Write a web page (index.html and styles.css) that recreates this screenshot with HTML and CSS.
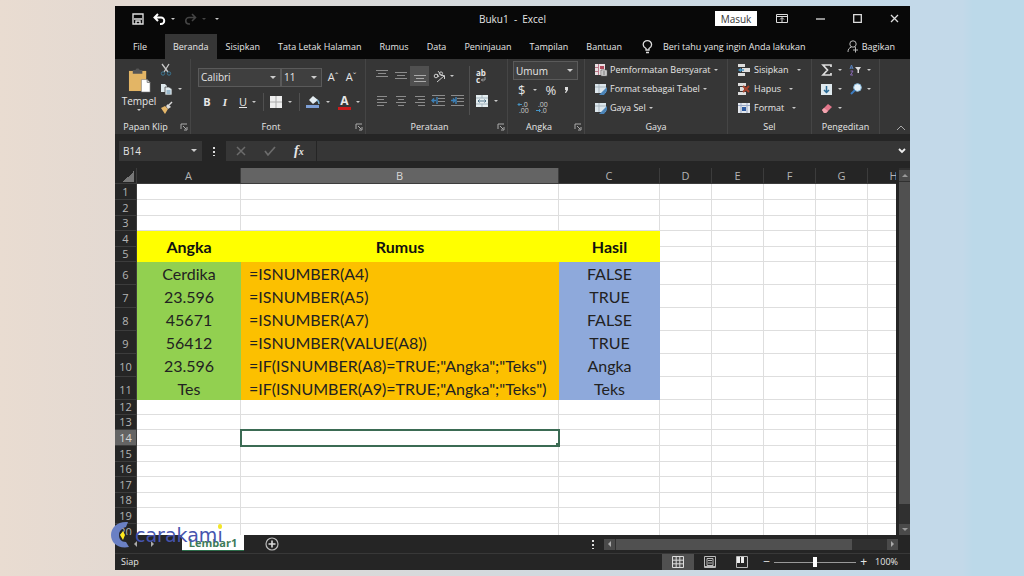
FILE: index.html
```html
<!DOCTYPE html>
<html lang="id">
<head>
  <meta charset="UTF-8" />
  <meta name="viewport" content="width=device-width, initial-scale=1.0"/>
  <title>Buku1 - Excel</title>
  <link rel="stylesheet" href="styles.css">
</head>
<body>
  <svg class="defs" aria-hidden="true">
    <symbol id="launch" viewBox="0 0 8 8"><path d="M1 6V1h6M3 3l3 3M7 4v3H4" fill="none" stroke="#aaa"/></symbol>
    <symbol id="table" viewBox="0 0 12 12"><path d="M0 1h11v9H0z" fill="#dce6ec"/><path d="M0 4h11M4 1v9" stroke="#a9b6bf" fill="none"/><path d="M12 4L7 9l-3 3h5l3-4z" fill="#4b84b8"/></symbol>
  </svg>

  <div class="window">
    <header class="titlebar">
      <div class="quick">
        <button aria-label="Simpan"><svg width="12" height="12" viewBox="0 0 12 12"><path d="M1 1h10v10H1z" fill="none" stroke="#ddd" stroke-width="1.4"/><path d="M2 6h8M4 11V8h4v3" fill="none" stroke="#ddd" stroke-width="1.4"/></svg></button>
        <button class="undo" aria-label="Urungkan"><svg width="13" height="12" viewBox="0 0 13 12"><path d="M5 1L1.500 4.500 5 8M2 4.500h6a3 3 0 0 1 0 6.500H7" fill="none" stroke="#fff" stroke-width="2"/></svg><i class="caret"></i></button>
        <button class="redo" aria-label="Ulangi"><svg width="13" height="12" viewBox="0 0 13 12"><path d="M8 1l3.500 3.500L8 8M11 4.500H5A3 3 0 0 0 5 11h1" fill="none" stroke="#444" stroke-width="1.600"/></svg><i class="caret dim"></i></button>
        <button class="more" aria-label="Kustomisasi"><i class="caret"></i></button>
      </div>
      <div class="title">Buku1 &nbsp;-&nbsp; Excel</div>
      <div class="controls">
        <button class="signin">Masuk</button>
        <button aria-label="Opsi pita"><svg width="12" height="9" viewBox="0 0 12 9"><path d="M.5.5h11v8H.5zM1 2.500h10M6 8V4M4 5.500l2-2 2 2" fill="none" stroke="#ddd"/></svg></button>
        <button aria-label="Kecilkan"><svg width="9" height="9" viewBox="0 0 9 9"><path d="M0 5h9" stroke="#ddd" stroke-width="1.300"/></svg></button>
        <button aria-label="Besarkan"><svg width="9" height="9" viewBox="0 0 9 9"><path d="M.7.7h7.600v7.600H.7z" fill="none" stroke="#ddd" stroke-width="1.300"/></svg></button>
        <button aria-label="Tutup"><svg width="9" height="9" viewBox="0 0 9 9"><path d="M1 1l7 7M8 1L1 8" stroke="#ddd" stroke-width="1.300"/></svg></button>
      </div>
    </header>

    <nav class="tabs">
      <button class="file">File</button>
      <button class="active">Beranda</button>
      <button>Sisipkan</button>
      <button>Tata Letak Halaman</button>
      <button>Rumus</button>
      <button>Data</button>
      <button>Peninjauan</button>
      <button>Tampilan</button>
      <button>Bantuan</button>
      <button class="tell"><svg width="11" height="14" viewBox="0 0 11 14"><path d="M4 10V8.500C2 7.500 1.200 6.500 1.200 4.800a4.200 4.200 0 0 1 8.400 0C9.600 6.500 9 7.500 7 8.500V10zM4 12.500h3" fill="none" stroke="#ddd" stroke-width="1.300"/></svg>Beri tahu yang ingin Anda lakukan</button>
      <button class="share"><svg width="12" height="13" viewBox="0 0 12 13"><circle cx="6" cy="4" r="3.200" fill="none" stroke="#bbb"/><path d="M1 12c0-3 1-4 3.500-5M7.500 7l1.500 1M6 10h5M8.500 7.500v5" fill="none" stroke="#bbb"/></svg>Bagikan</button>
    </nav>

    <section class="ribbon">
      <div class="group">
        <div class="clipboard">
          <button class="paste"><svg width="23" height="25" viewBox="0 0 24 26"><path d="M1 3h18v21H1z" fill="#e3b565"/><path d="M5 2h3c0-2 4-2 4 0h3v4H5z" fill="#555"/><path d="M14 12h6l3 3v10h-9z" fill="#fff" stroke="#777" stroke-width=".6"/><path d="M20 12v3h3" fill="none" stroke="#777"/></svg><span>Tempel</span><i class="caret"></i></button>
          <div class="clip-tools">
            <button aria-label="Potong"><svg width="12" height="12" viewBox="0 0 12 12"><path d="M2 0l6 8M9 0L4 8" stroke="#c8c8c8" stroke-width="1.300"/><circle cx="3" cy="9.500" r="1.700" fill="none" stroke="#3b7692"/><circle cx="9" cy="9.500" r="1.700" fill="none" stroke="#3b7692"/></svg></button>
            <button aria-label="Salin"><svg width="12" height="12" viewBox="0 0 12 12"><path d="M1 1h4l2 2v6H1z" fill="#dfe9ed"/><path d="M5 4h4l3 2v6H5z" fill="#dfe9ed" stroke="#3c3c3c" stroke-width=".7"/><path d="M6.500 8h4M6.500 10h4" stroke="#58a"/></svg><i class="caret"></i></button>
            <button aria-label="Pemformat"><svg width="12" height="12" viewBox="0 0 12 12"><path d="M1 6l4-2 3 3-3 5z" fill="#e5b76a"/><path d="M6 4l2-2 3 3-3 2z" fill="#ddd"/><path d="M9 3l3-3" stroke="#ddd" stroke-width="1.500"/></svg></button>
          </div>
        </div>
        <div class="label more-label">Papan Klip<svg class="launch"><use href="#launch"/></svg></div>
      </div>

      <div class="group">
        <div class="tools font-tools">
          <div class="row">
            <span class="select wide"><select aria-label="Font"><option>Calibri</option></select></span>
            <span class="select size"><select aria-label="Ukuran font"><option>11</option></select></span>
            <button class="letter grow">A<sup>ˆ</sup></button>
            <button class="letter">A<sup>ˇ</sup></button>
          </div>
          <div class="row">
            <button class="letter"><b>B</b></button>
            <button class="letter serif"><b><i>I</i></b></button>
            <button class="letter"><u>U</u></button>
            <button aria-label="Opsi garis bawah"><i class="caret"></i></button>
            <button class="sep" aria-label="Batas"><svg width="12" height="12" viewBox="0 0 12 12"><path d="M0 0h12v12H0z" fill="#eee"/><path d="M6 0v12M0 6h12" stroke="#aaa"/></svg><i class="caret"></i></button>
            <button class="sep" aria-label="Warna isian"><svg width="14" height="14" viewBox="0 0 14 14"><path d="M3 5l4-4 5 4-5 4z" fill="#e4edf2"/><path d="M11 5c2 1 2 3 2 4" stroke="#79b3d8" fill="none" stroke-width="1.500"/><path d="M0 10h13v3H0z" fill="#7d9fd6"/></svg><i class="caret"></i></button>
            <button class="color" aria-label="Warna font"><span>A</span><i class="caret"></i></button>
          </div>
        </div>
        <div class="label more-label">Font<svg class="launch"><use href="#launch"/></svg></div>
      </div>

      <div class="group">
        <div class="tools align-tools">
          <div class="align-set">
            <button aria-label="Rata atas"><svg width="12" height="14" viewBox="0 0 12 14"><path d="M0 1.500h12M2 4.500h8M0 7.500h12" stroke="#8c8c8c"/></svg></button>
            <button aria-label="Rata tengah"><svg width="12" height="14" viewBox="0 0 12 14"><path d="M0 3.500h12M2 6.500h8M0 9.500h12" stroke="#8c8c8c"/></svg></button>
            <button class="on" aria-label="Rata bawah"><svg width="12" height="14" viewBox="0 0 12 14"><path d="M0 6.500h12M2 9.500h8M0 12.500h12" stroke="#aaa"/></svg></button>
            <button class="two" aria-label="Orientasi"><svg width="14" height="13" viewBox="0 0 14 13"><g fill="none" stroke="#ccc"><circle cx="3" cy="6" r="1.800"/><path d="M4 4l2 3M5 1l3 4"/><circle cx="8" cy="3.500" r="1.600"/><path d="M4 12l7-6M8 5.500h3.500V9"/></g></svg><i class="caret"></i></button>
            <button aria-label="Rata kiri"><svg width="10" height="10" viewBox="0 0 10 10"><path d="M0 .5h10M0 3.500h7M0 6.500h10M0 9.500h7" stroke="#8c8c8c"/></svg></button>
            <button aria-label="Rata pusat"><svg width="10" height="10" viewBox="0 0 10 10"><path d="M0 .5h10M2 3.500h6M0 6.500h10M2 9.500h6" stroke="#8c8c8c"/></svg></button>
            <button aria-label="Rata kanan"><svg width="10" height="10" viewBox="0 0 10 10"><path d="M0 .5h10M3 3.500h7M0 6.500h10M3 9.500h7" stroke="#8c8c8c"/></svg></button>
            <button aria-label="Kurangi inden"><svg width="13" height="12" viewBox="0 0 13 12"><path d="M0 .5h13M6 3.500h7M6 6.500h7M0 10.500h13" stroke="#8c8c8c"/><path d="M5 2v7M4 5.500H0M2 3.500l-2 2 2 2" fill="none" stroke="#3c81b8" stroke-width="1.400"/></svg></button>
            <button aria-label="Tambah inden"><svg width="13" height="12" viewBox="0 0 13 12"><path d="M0 .5h13M6 3.500h7M6 6.500h7M0 10.500h13" stroke="#8c8c8c"/><path d="M5 2v7M0 5.500h4M2 3.500l2 2-2 2" fill="none" stroke="#3c81b8" stroke-width="1.400"/></svg></button>
          </div>
          <div class="wrap-set">
            <button class="wraptext"><span>ab<br>c</span><svg width="5" height="6" viewBox="0 0 5 6"><path d="M4 0v3H0M2 1.500L.5 3 2 4.500" fill="none" stroke="#999"/></svg></button>
            <button aria-label="Gabungkan"><svg width="12" height="12" viewBox="0 0 12 12"><path d="M0 0h12v12H0z" fill="#e4edf0"/><path d="M0 3h12M0 9h12M6 0v3M6 9v3" fill="none" stroke="#a3b3bd"/><path d="M2 6h8M3.500 4.500L2 6l1.500 1.500M8.500 4.500L10 6 8.500 7.500" fill="none" stroke="#52748a"/></svg><i class="caret"></i></button>
          </div>
        </div>
        <div class="label more-label">Perataan<svg class="launch"><use href="#launch"/></svg></div>
      </div>

      <div class="group">
        <div class="number">
          <span class="select"><select aria-label="Format angka"><option>Umum</option></select></span>
          <div class="row signs"><button>$</button><button aria-label="Mata uang"><i class="caret"></i></button><button>%</button><button aria-label="Gaya koma"><svg width="5" height="8" viewBox="0 0 5 8"><path d="M1 1h3v3L2 7H1l1-3H1z" fill="#ddd"/></svg></button></div>
          <div class="row decimals">
            <button aria-label="Tambah desimal"><svg width="12" height="13" viewBox="0 0 12 13"><text x="5" y="6" font-size="7" fill="#ccc">.0</text><text x="2" y="12" font-size="7" fill="#ccc">.00</text><path d="M5 3.500H1M2.500 2L1 3.500 2.500 5" fill="none" stroke="#4694c4"/></svg></button>
            <button aria-label="Kurangi desimal"><svg width="12" height="13" viewBox="0 0 12 13"><text x="2" y="6" font-size="7" fill="#ccc">.00</text><text x="5" y="12" font-size="7" fill="#ccc">.0</text><path d="M0 9.500h4M3 8l1.500 1.500L3 11" fill="none" stroke="#4694c4"/></svg></button>
          </div>
        </div>
        <div class="label more-label">Angka<svg class="launch"><use href="#launch"/></svg></div>
      </div>

      <div class="group">
        <div class="list styles">
          <button><svg width="12" height="12" viewBox="0 0 12 12"><path d="M0 0h10v11H0z" fill="#e8dfe2"/><path d="M3.500 0v11M0 3.500h4M0 7.500h4" stroke="#b78" fill="none"/><path d="M5 2h4v3H5z" fill="#b04a5c"/><path d="M6 6h6v6H6z" fill="#eee" stroke="#555" stroke-width=".7"/><path d="M7.500 8h3M7.500 10h3" stroke="#555"/></svg>Pemformatan Bersyarat<i class="caret"></i></button>
          <button><svg width="12" height="12"><use href="#table"/></svg>Format sebagai Tabel<i class="caret"></i></button>
          <button><svg width="12" height="12"><use href="#table"/></svg>Gaya Sel<i class="caret"></i></button>
        </div>
        <div class="label">Gaya</div>
      </div>

      <div class="group">
        <div class="list cells">
          <button><svg width="12" height="12" viewBox="0 0 12 12"><path d="M0 0h7v3H0zM0 9h7v3H0z" fill="#ddd"/><path d="M4 4h8v4H4z" fill="#ddd"/><path d="M3 4.500L1 6l2 1.500M1 6h5" stroke="#4694c4" fill="none" stroke-width="1.300"/></svg><span>Sisipkan</span><i class="caret"></i></button>
          <button><svg width="12" height="12" viewBox="0 0 12 12"><path d="M0 0h8v3H0zM0 9h8v3H0zM2 4h4v4H2z" fill="#ddd"/><path d="M5 3l6 6M11 3L5 9" stroke="#a9442f" stroke-width="2"/></svg><span>Hapus</span><i class="caret"></i></button>
          <button><svg width="12" height="12" viewBox="0 0 12 12"><path d="M0 1h12v10H0z" fill="#e4e8ee"/><path d="M0 3.500h12M3 1v10M9 1v10" stroke="#9aa8c4" fill="none"/><path d="M4 5h4v4H4z" fill="#2d5aa0"/></svg><span>Format</span><i class="caret"></i></button>
        </div>
        <div class="label">Sel</div>
      </div>

      <div class="group">
        <div class="edit">
          <button aria-label="Jumlah"><svg width="12" height="12" viewBox="0 0 12 12"><path d="M10 3V1H2l4.500 5L2 11h8V9" fill="none" stroke="#ddd" stroke-width="1.700"/></svg><i class="caret"></i></button>
          <button aria-label="Urutkan"><svg width="12" height="12" viewBox="0 0 12 12"><path d="M0 5l1.500-4L3 5M.5 4h2" fill="none" stroke="#5a83c0"/><path d="M.5 7h2.500l-2.500 4H3" fill="none" stroke="#8a6ab5"/><path d="M5 3h6L9 6v3H7.500V6z" fill="#ddd"/></svg><i class="caret"></i></button>
          <button aria-label="Isi"><svg width="12" height="12" viewBox="0 0 12 12"><path d="M0 1h11v11H0z" fill="#dfe9ee"/><path d="M5.500 3v6M3 7l2.500 2.500L8 7" fill="none" stroke="#2c6c96" stroke-width="1.500"/></svg><i class="caret"></i></button>
          <button aria-label="Temukan"><svg width="12" height="12" viewBox="0 0 12 12"><circle cx="7.500" cy="4.500" r="3.800" fill="#e8f3fa" stroke="#8cc0e4"/><path d="M5 7l-4 4" stroke="#3d7cc0" stroke-width="2"/></svg><i class="caret"></i></button>
          <button aria-label="Hapus isi"><svg width="12" height="12" viewBox="0 0 12 12"><path d="M1 8l6-6 4 3-6 6H3z" fill="#e2768a"/><path d="M1 8l2-2 4 3-2 2H3z" fill="#f2a5b0"/></svg><i class="caret"></i></button>
        </div>
        <div class="label">Pengeditan</div>
      </div>
      <button class="collapse" aria-label="Ciutkan pita"><svg width="10" height="6" viewBox="0 0 10 6"><path d="M1 5l4-4 4 4" fill="none" stroke="#aaa"/></svg></button>
    </section>

    <div class="formula-bar">
      <span class="select namebox"><input type="text" value="B14" aria-label="Kotak nama"></span>
      <span class="dots"></span>
      <div class="fx">
        <button aria-label="Batal"><svg width="10" height="10" viewBox="0 0 10 10"><path d="M1 1l8 8M9 1L1 9" stroke="#6c6c6c" stroke-width="1.500"/></svg></button>
        <button aria-label="Masukkan"><svg width="12" height="10" viewBox="0 0 12 10"><path d="M1 5l3 4 7-8" fill="none" stroke="#6c6c6c" stroke-width="1.700"/></svg></button>
        <button class="fn"><i>f<small>x</small></i></button>
      </div>
      <input class="formula" type="text" aria-label="Rumus">
      <button class="expand" aria-label="Perluas"><svg width="8" height="6" viewBox="0 0 8 6"><path d="M1 1l3 3 3-3" fill="none" stroke="#eee" stroke-width="1.800"/></svg></button>
    </div>

    <main class="sheet">
      <div class="grid">
        <table>
          <colgroup><col class="c-num"><col class="c-a"><col class="c-b"><col class="c-c"><col class="c-n"><col class="c-n"><col class="c-n"><col class="c-n"><col class="c-n"></colgroup>
          <thead>
            <tr><th class="corner"></th><th>A</th><th class="sel">B</th><th>C</th><th>D</th><th>E</th><th>F</th><th>G</th><th>H</th></tr>
          </thead>
          <tbody>
            <tr><th>1</th><td></td><td></td><td></td><td></td><td></td><td></td><td></td><td></td></tr>
            <tr><th>2</th><td></td><td></td><td></td><td></td><td></td><td></td><td></td><td></td></tr>
            <tr class="short"><th>3</th><td></td><td></td><td></td><td></td><td></td><td></td><td></td><td></td></tr>
            <tr><th>4</th><td class="head" rowspan="2">Angka</td><td class="head" rowspan="2">Rumus</td><td class="head" rowspan="2">Hasil</td><td></td><td></td><td></td><td></td><td></td></tr>
            <tr class="short"><th>5</th><td></td><td></td><td></td><td></td><td></td></tr>
            <tr class="tall"><th>6</th><td class="green">Cerdika</td><td class="orange">=ISNUMBER(A4)</td><td class="blue">FALSE</td><td></td><td></td><td></td><td></td><td></td></tr>
            <tr class="tall"><th>7</th><td class="green">23.596</td><td class="orange">=ISNUMBER(A5)</td><td class="blue">TRUE</td><td></td><td></td><td></td><td></td><td></td></tr>
            <tr class="tall"><th>8</th><td class="green">45671</td><td class="orange">=ISNUMBER(A7)</td><td class="blue">FALSE</td><td></td><td></td><td></td><td></td><td></td></tr>
            <tr class="tall"><th>9</th><td class="green">56412</td><td class="orange">=ISNUMBER(VALUE(A8))</td><td class="blue">TRUE</td><td></td><td></td><td></td><td></td><td></td></tr>
            <tr class="tall"><th>10</th><td class="green">23.596</td><td class="orange">=IF(ISNUMBER(A8)=TRUE;"Angka";"Teks")</td><td class="blue">Angka</td><td></td><td></td><td></td><td></td><td></td></tr>
            <tr class="tall"><th>11</th><td class="green">Tes</td><td class="orange">=IF(ISNUMBER(A9)=TRUE;"Angka";"Teks")</td><td class="blue">Teks</td><td></td><td></td><td></td><td></td><td></td></tr>
            <tr class="short"><th>12</th><td></td><td></td><td></td><td></td><td></td><td></td><td></td><td></td></tr>
            <tr class="short"><th>13</th><td></td><td></td><td></td><td></td><td></td><td></td><td></td><td></td></tr>
            <tr><th class="sel">14</th><td></td><td class="cursor"></td><td></td><td></td><td></td><td></td><td></td><td></td></tr>
            <tr><th>15</th><td></td><td></td><td></td><td></td><td></td><td></td><td></td><td></td></tr>
            <tr class="short"><th>16</th><td></td><td></td><td></td><td></td><td></td><td></td><td></td><td></td></tr>
            <tr><th>17</th><td></td><td></td><td></td><td></td><td></td><td></td><td></td><td></td></tr>
            <tr class="short"><th>18</th><td></td><td></td><td></td><td></td><td></td><td></td><td></td><td></td></tr>
            <tr><th>19</th><td></td><td></td><td></td><td></td><td></td><td></td><td></td><td></td></tr>
            <tr><th>20</th><td></td><td></td><td></td><td></td><td></td><td></td><td></td><td></td></tr>
          </tbody>
        </table>
      </div>
      <div class="vscroll">
        <button class="up" aria-label="Gulir ke atas"></button>
        <div class="thumb"></div>
        <button class="down" aria-label="Gulir ke bawah"></button>
      </div>
    </main>

    <div class="sheet-tabs">
      <div class="nav"><button class="left" aria-label="Sebelumnya"></button><button class="right" aria-label="Berikutnya"></button></div>
      <button class="sheet-tab">Lembar1</button>
      <button class="add" aria-label="Lembar baru"><svg width="14" height="14" viewBox="0 0 14 14"><circle cx="7" cy="7" r="6" fill="none" stroke="#bbb" stroke-width="1.200"/><path d="M7 3.500v7M3.500 7h7" stroke="#ddd" stroke-width="1.600"/></svg></button>
      <span class="dots"></span>
      <div class="hscroll">
        <button class="left" aria-label="Gulir kiri"></button>
        <div class="thumb"></div>
        <button class="right" aria-label="Gulir kanan"></button>
      </div>
    </div>

    <footer class="status">
      <span class="ready">Siap</span>
      <button class="on" aria-label="Normal"><svg width="12" height="12" viewBox="0 0 12 12"><path d="M.5.5h11v11H.5zM4.200 0v12M7.800 0v12M0 4.200h12M0 7.800h12" fill="none" stroke="#ddd"/></svg></button>
      <button aria-label="Tata letak"><svg width="12" height="12" viewBox="0 0 12 12"><path d="M.5.500h11v11H.5zM3 2.500h6v7H3zM4 4.500h4M4 7h4M1 10.500h10" fill="none" stroke="#bbb"/></svg></button>
      <button aria-label="Pratinjau"><svg width="12" height="12" viewBox="0 0 12 12"><path d="M.5.5h11v11H.5z" fill="none" stroke="#bbb"/><path d="M1 1h3v6H1zM5 1h3v6H5z" fill="#eee"/></svg></button>
      <div class="zoom">
        <button>−</button>
        <input type="range" min="0" max="100" value="50" aria-label="Zum">
        <button>+</button>
      </div>
      <span class="percent">100%</span>
    </footer>

    <div class="brand">
      <svg width="22" height="28" viewBox="0 0 22 28"><path d="M17 1C7 0 0 6 0 14s7 14 18 12l-3-5c-5 0-7-3-7-7s3-7 7-8z" fill="#6a80c4"/><path d="M12 10l2 4-2 5-3-5z" fill="#ffe81c"/></svg>
      <span class="word">carakam<span class="last">ı</span></span>
    </div>
  </div>
</body>
</html>
```
FILE: styles.css
```css
* {
    box-sizing: border-box;
}

body {
    margin: 0;
    height: 100vh;
    padding: 6px 114px 6px 115px;
    font-family: "Open Sans", "Noto Sans", sans-serif;
    font-size: 9px;
    line-height: 12px;
    color: #e6e6e6;
    background: linear-gradient(90deg, #e9dcd1 0%, #e3d9d2 12%, #d5d9dc 45%, #c3d9e9 88%, #c3d9e9 94%, #bcd9e9 95%);
}

button, input, select {
    font: inherit;
    color: inherit;
    background: none;
    border: none;
    border-radius: 0;
    margin: 0;
    padding: 0;
}

button {
    display: flex;
    align-items: center;
    justify-content: center;
    white-space: nowrap;
}

svg {
    display: block;
    flex: none;
    overflow: visible;
}

.defs {
    position: absolute;
    width: 0;
    height: 0;
}

.caret {
    flex: none;
    border: 2px solid transparent;
    border-top-color: #c8c8c8;
    border-bottom: none;
}

.caret.dim {
    border-top-color: #444;
}

.window {
    position: relative;
    height: 100%;
    display: flex;
    flex-direction: column;
    background: #252525;
}

/* title bar */
.titlebar {
    flex: none;
    height: 28px;
    display: grid;
    grid-template-columns: 1fr auto 1fr;
    align-items: center;
    padding-bottom: 3px;
    background: #080808;
}

.quick {
    display: flex;
    align-items: center;
    padding-left: 17px;
    gap: 9px;
}

.quick button {
    gap: 5px;
}

.title {
    font-size: 10px;
}

.controls {
    display: flex;
    justify-content: flex-end;
    align-items: center;
    gap: 28px;
    padding-right: 11px;
}

.signin {
    width: 42px;
    height: 15px;
    margin-right: -9px;
    background: #fff;
    color: #333;
    font-size: 10px;
}

/* ribbon tabs */
.tabs {
    flex: none;
    height: 25px;
    display: flex;
    background: #080808;
}

.tabs button {
    padding: 0 9px;
}

.tabs .file {
    width: 50px;
}

.tabs .active {
    padding: 0 8px;
    background: #363636;
}

.tabs .tell {
    gap: 10px;
    padding-left: 11px;
}

.tabs .share {
    gap: 3px;
    margin-left: auto;
    padding-right: 15px;
}

/* ribbon */
.ribbon {
    flex: none;
    height: 75px;
    display: grid;
    grid-template-columns: 76px 175px 142px 77px 143px 84px 68px 1fr;
    background: #363636;
}

.group {
    display: flex;
    flex-direction: column;
    justify-content: space-between;
    border-right: 1px solid #454545;
}

.label {
    position: relative;
    height: 15px;
    line-height: 15px;
    text-align: center;
}

.more-label {
    padding-right: 14px;
}

.launch {
    position: absolute;
    right: 2px;
    top: 4px;
    width: 8px;
    height: 8px;
}

.row {
    display: flex;
    align-items: center;
}

.clipboard {
    display: flex;
    gap: 4px;
    padding: 5px 0 0 7px;
}

.paste {
    width: 34px;
    flex-direction: column;
    font-size: 10px;
    gap: 2px;
}

.clip-tools {
    display: flex;
    flex-direction: column;
    align-items: flex-start;
    gap: 7px;
}

.clip-tools button {
    gap: 6px;
}

.select {
    position: relative;
    display: block;
}

.select::after {
    content: "";
    position: absolute;
    right: 5px;
    top: 8px;
    border: 3px solid transparent;
    border-top-color: #ccc;
    border-bottom: none;
    pointer-events: none;
}

.select select {
    appearance: none;
    width: 100%;
    height: 19px;
    padding-left: 2px;
    border: 1px solid #5a5a5a;
    background: #3f3f3f;
    font-size: 10px;
}

.tools {
    height: 56px;
}

.font-tools {
    padding: 8px 0 0 7px;
}

.font-tools .row + .row {
    margin-top: 5px;
}

.wide {
    width: 83px;
}

.size {
    width: 41px;
}

.letter {
    width: 18px;
    height: 20px;
    font-size: 11px;
}

.letter sup {
    font-size: 9px;
    line-height: 4px;
}

.grow {
    margin-left: 2px;
}

.serif {
    font-family: "Liberation Serif", serif;
}

.sep {
    gap: 6px;
    height: 18px;
    margin-left: 7px;
    padding-left: 6px;
    border-left: 1px solid #505050;
}

.color {
    gap: 5px;
    margin-left: 8px;
}

.color span {
    width: 13px;
    height: 15px;
    border-bottom: 3px solid #cc1b1b;
    font-size: 12px;
    line-height: 11px;
    font-weight: bold;
}

.align-tools {
    display: flex;
    padding: 7px 0 0 6px;
}

.align-set {
    display: grid;
    grid-template-columns: repeat(5, 19px);
    grid-template-rows: 20px 20px;
    row-gap: 5px;
}

.align-set .on {
    background: #505050;
}

.align-set .two {
    grid-column: span 2;
    justify-content: flex-start;
    gap: 3px;
    padding-left: 4px;
}

.wrap-set {
    display: grid;
    grid-template-rows: 20px 20px;
    row-gap: 5px;
    justify-items: start;
    margin-left: 2px;
    padding-left: 6px;
    border-left: 1px solid #505050;
}

.wrap-set button {
    gap: 6px;
}

.wrap-set .wraptext {
    gap: 0;
    align-items: flex-end;
    align-self: center;
    font-size: 8px;
    font-weight: bold;
    line-height: 7px;
    text-align: left;
}

.wraptext svg {
    margin-left: -5px;
}

.number {
    padding: 2px 6px 0 5px;
}

.signs {
    height: 19px;
    gap: 8px;
    padding-left: 5px;
    font-size: 13px;
}

.decimals {
    gap: 7px;
    padding: 2px 0 0 4px;
}

.list {
    display: grid;
    grid-template-rows: repeat(3, 19px);
    justify-items: start;
    padding: 1px 0 0 10px;
}

.list button {
    gap: 3px;
}

.cells button {
    gap: 4px;
}

.cells .caret {
    margin-left: 4px;
}

.edit {
    display: grid;
    grid-template-columns: 29px 29px;
    grid-template-rows: repeat(3, 19px);
    justify-items: start;
    padding: 1px 0 0 9px;
}

.edit button {
    gap: 5px;
}

.collapse {
    align-items: flex-end;
    justify-content: flex-end;
    padding: 0 4px 3px 0;
}

/* formula bar */
.formula-bar {
    flex: none;
    display: flex;
    height: 34px;
    padding: 7px 0 7px 4px;
}

.namebox {
    width: 83px;
    background: #363636;
}

.namebox input {
    width: 100%;
    height: 20px;
    padding-left: 4px;
    font-size: 10px;
}

.dots {
    width: 2px;
    height: 9px;
    margin: auto 11px;
    background: repeating-linear-gradient(#ddd 0 2px, transparent 2px 4px);
}

.fx {
    display: flex;
    gap: 18px;
    padding: 0 12px 0 10px;
    background: #363636;
    border-right: 1px solid #252525;
}

.fn {
    font-family: "Liberation Serif", serif;
    font-size: 14px;
    font-weight: bold;
}

.fn small {
    font-size: 10px;
}

.formula {
    flex: 1;
    min-width: 0;
    background: #363636;
}

.expand {
    width: 16px;
    background: #363636;
}

/* worksheet */
.sheet {
    flex: 1;
    min-height: 0;
    display: flex;
    gap: 3px;
}

.grid {
    flex: 1;
    min-width: 0;
    overflow: hidden;
}

table {
    width: 805px;
    table-layout: fixed;
    border-collapse: separate;
    border-spacing: 0;
    background: #fff;
}

.c-num { width: 22px; }
.c-a { width: 104px; }
.c-b { width: 318px; }
.c-c { width: 101px; }
.c-n { width: 52px; }

th, td {
    height: 16px;
    padding: 0;
    line-height: 14px;
}

th {
    background: #252525;
    color: #b4b4b4;
    font-size: 11px;
    font-weight: normal;
    border-right: 1px solid #3c3c3c;
    border-bottom: 1px solid #3c3c3c;
}

th.sel {
    background: #646464;
    color: #d8d8d8;
}

th.corner {
    background: linear-gradient(135deg, #252525 50%, #777 50%) 8px 3px / 11px 11px no-repeat #252525;
}

td {
    border-right: 1px solid #dedede;
    border-bottom: 1px solid #dedede;
    text-align: center;
    white-space: nowrap;
    color: #222;
    font-family: Lato, "Open Sans", sans-serif;
    font-size: 16px;
}

.short th, .short td {
    height: 15px;
}

.tall th, .tall td {
    height: 23px;
    line-height: 22px;
}

.tall th {
    padding-top: 4px;
    line-height: 18px;
}

td.head, td.green, td.orange, td.blue {
    border: none;
}

td.head {
    background: #ffff00;
    color: #111;
    font-weight: bold;
}

td.green {
    background: #92d050;
}

td.orange {
    background: #fcc000;
    text-align: left;
    padding-left: 8px;
}

td.blue {
    background: #8ea9db;
}

.cursor {
    position: relative;
    outline: 2px solid #3b6b54;
    outline-offset: -1px;
}

.cursor::after {
    content: "";
    position: absolute;
    right: -2px;
    bottom: -2px;
    width: 4px;
    height: 4px;
    background: #3b6b54;
}

.vscroll {
    width: 11px;
    display: flex;
    flex-direction: column;
    padding-top: 2px;
    background: #303030;
}

.vscroll .thumb {
    flex: 1;
    margin: 1px 0 20px;
    background: #505050;
}

.up, .down, .hscroll button {
    height: 11px;
    background: #4a4a4a;
}

.up::before, .down::before, .left::before, .right::before {
    content: "";
    border: 3px solid transparent;
}

.up::before {
    border-bottom-color: #999;
    border-top: none;
}

.down::before {
    border-top-color: #999;
    border-bottom: none;
}

.left::before {
    border-right-color: #aaa;
    border-left: none;
}

.right::before {
    border-left-color: #aaa;
    border-right: none;
}

/* sheet tabs */
.sheet-tabs {
    flex: none;
    height: 19px;
    display: flex;
    align-items: center;
    border-bottom: 1px solid #383838;
}

.nav {
    width: 67px;
    display: flex;
    gap: 14px;
    padding-left: 19px;
}

.sheet-tab {
    width: 62px;
    height: 16px;
    align-self: flex-start;
    background: #fff;
    border-bottom: 1px solid #2c6d4a;
    color: #3d7a58;
    font-size: 11px;
    font-weight: bold;
}

.add {
    margin-left: 21px;
}

.sheet-tabs .dots {
    margin: 0 10px 0 auto;
}

.hscroll {
    width: 37%;
    display: flex;
    margin-right: 12px;
    background: #303030;
}

.hscroll button {
    width: 11px;
}

.hscroll .thumb {
    flex: 1;
    margin: 0 35px 0 1px;
    background: #505050;
}

/* status bar */
.status {
    flex: none;
    height: 16px;
    display: flex;
    align-items: center;
    padding-right: 12px;
}

.ready {
    flex: 1;
    padding-left: 6px;
}

.status > button {
    width: 32px;
    height: 16px;
}

.status .on {
    background: #505050;
}

.zoom {
    display: flex;
    align-items: center;
    gap: 4px;
    padding: 0 8px 0 5px;
}

.zoom button {
    font-size: 12px;
}

.zoom input {
    appearance: none;
    width: 82px;
    height: 10px;
    background: linear-gradient(#999, #999) center / 100% 1px no-repeat;
}

.zoom input::-webkit-slider-thumb {
    appearance: none;
    width: 4px;
    height: 10px;
    background: #fff;
}

/* brand mark laid over the lower left corner */
.brand {
    position: absolute;
    left: -4px;
    bottom: 21px;
    display: flex;
    align-items: center;
    gap: 2px;
}

.word {
    font-family: "DejaVu Sans", sans-serif;
    font-size: 19px;
    line-height: 24px;
    color: #4654ae;
}

.last {
    position: relative;
}

.last::before {
    content: "";
    position: absolute;
    left: 1px;
    top: 0;
    width: 4px;
    height: 5px;
    border-radius: 2px;
    background: #f3e62a;
}
```
